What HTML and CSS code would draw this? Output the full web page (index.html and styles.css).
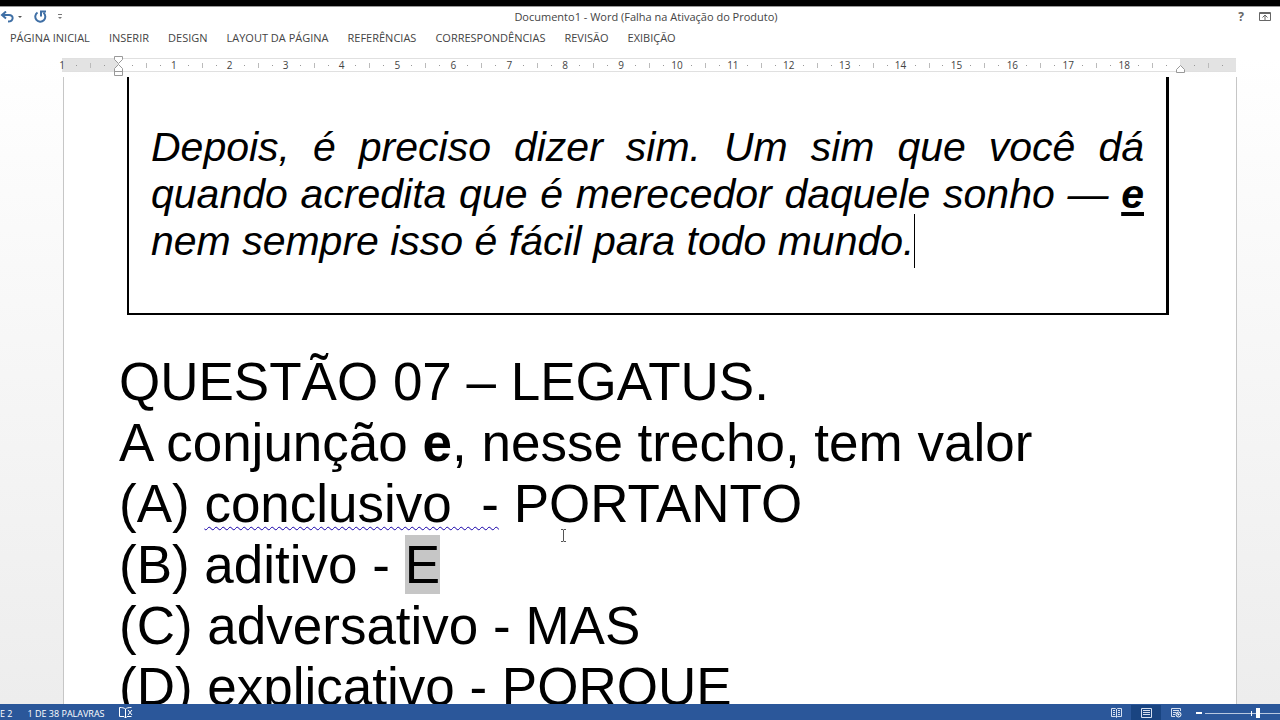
FILE: index.html
```html
<!DOCTYPE html>
<html lang="pt-BR">
<head>
  <meta charset="UTF-8">
  <title>Documento1 - Word</title>
  <link rel="stylesheet" href="styles.css">
</head>
<body>
  <!-- Title bar -->
  <header class="titlebar">
    <div class="quick">
      <button type="button" class="undo" aria-label="Desfazer">
        <svg width="14" height="12" viewBox="0 0 14 12"><path d="M6 0.500L2 4l4 3.500M2 4h7c5 0 5 6.500 -1 6.500" fill="none" stroke="#3f6fa5" stroke-width="2"/></svg>
      </button>
      <button type="button" class="arrow" aria-label="Opções de desfazer">
        <svg width="4" height="2" viewBox="0 0 4 2"><path d="M0 0h4L2 2z" fill="#555"/></svg>
      </button>
      <button type="button" class="redo" aria-label="Repetir">
        <svg width="13" height="13" viewBox="0 0 13 13"><path d="M3.500 2.500A5 5 0 1 0 9.500 2.800M7 6.500V1.500h5" fill="none" stroke="#3f6fa5" stroke-width="2"/></svg>
      </button>
      <button type="button" class="custom" aria-label="Personalizar">
        <svg width="4" height="5" viewBox="0 0 4 5"><path d="M0 0h4v1H0zM0 3h4L2 5z" fill="#777"/></svg>
      </button>
    </div>
    <div class="title">Documento1 - Word (Falha na Ativação do Produto)</div>
    <div class="window-tools">
      <button type="button" class="help" aria-label="Ajuda">?</button>
      <button type="button" aria-label="Opções de Exibição da Faixa de Opções">
        <svg width="12" height="9" viewBox="0 0 12 9"><path d="M0.500 0.500h11v8h-11zM0.500 1.500h11M6 8V3M3.500 5.500L6 3l2.500 2.500" fill="none" stroke="#666"/></svg>
      </button>
    </div>
  </header>

  <!-- Ribbon tabs -->
  <nav class="tabs">
    <button type="button">PÁGINA INICIAL</button>
    <button type="button">INSERIR</button>
    <button type="button">DESIGN</button>
    <button type="button">LAYOUT DA PÁGINA</button>
    <button type="button">REFERÊNCIAS</button>
    <button type="button">CORRESPONDÊNCIAS</button>
    <button type="button">REVISÃO</button>
    <button type="button">EXIBIÇÃO</button>
  </nav>

  <div class="workspace">
    <!-- Ruler, one cell per centimetre -->
    <div class="ruler" id="ruler"></div>

    <!-- Page -->
    <main class="page">
      <section class="quote">
        <p>Depois, é preciso dizer sim. Um sim que você dá quando acredita que é merecedor daquele sonho — <b class="key">e</b> nem sempre isso é fácil para todo mundo.<span class="caret"></span></p>
      </section>
      <section class="question">
        <p>QUESTÃO 07 – LEGATUS.</p>
        <p>A conjunção <b>e</b>, nesse trecho, tem valor</p>
        <p>(A) <span class="grammar">conclusivo  -</span> PORTANTO</p>
        <p>(B) aditivo - <span class="selected">E</span></p>
        <p>(C) adversativo - MAS</p>
        <p>(D) explicativo - PORQUE</p>
      </section>
      <svg class="cursor" width="7" height="13" viewBox="0 0 7 13"><path d="M1 0.500h2l0.500 0.500l0.500-0.500h2M3.500 1v11M1 12.500h2l0.500-0.500l0.500 0.500h2" fill="none" stroke="#555"/></svg>
    </main>
  </div>

  <!-- Status bar -->
  <footer class="statusbar">
    <span class="page-count">E 2</span>
    <span class="word-count">1 DE 38 PALAVRAS</span>
    <button type="button" class="proof" aria-label="Revisão de texto">
      <svg width="14" height="12" viewBox="0 0 14 12"><path d="M6.500 2C5 0.800 3 0.500 0.500 0.500v9H5l1.500 1.500V2C7.500 1 9 0.500 12.500 0.500M6.500 11L8 9.500h4.500M9 3l4 5M13 3l-4 5" fill="none" stroke="#fff"/></svg>
    </button>
    <div class="views">
      <button type="button" aria-label="Modo de leitura">
        <svg width="11" height="10" viewBox="0 0 11 10"><path d="M0.500 0.500h4l1 1l1-1h4v8h-4l-1 1l-1-1h-4zM5.500 1v8M2 2.500h2M2 4.500h2M2 6.500h2M7 2.500h2M7 4.500h2M7 6.500h2" fill="none" stroke="#d5dff0"/></svg>
      </button>
      <button type="button" class="active" aria-label="Layout de impressão">
        <svg width="11" height="10" viewBox="0 0 11 10"><path d="M0.500 0.500h10v9h-10zM2 2.500h7M2 4.500h7M2 6.500h7" fill="none" stroke="#d5dff0"/></svg>
      </button>
      <button type="button" aria-label="Layout da Web">
        <svg width="11" height="10" viewBox="0 0 11 10"><path d="M4 8.500H0.500v-8h9V3M2 2.500h6M2 4.500h3M2 6.500h2" fill="none" stroke="#d5dff0"/><circle cx="7.500" cy="6.500" r="2.500" fill="#2b579a" stroke="#fff"/><path d="M6 5l3 1l-2 2z" fill="#fff"/></svg>
      </button>
    </div>
    <button type="button" class="minus" aria-label="Reduzir"></button>
    <input type="range" class="zoom" min="0" max="100" value="50" aria-label="Zoom">
  </footer>

  <script>
    // Cells run from -1 to 19, the margins carry no number of their own past 18.
    let html = '';
    for (let cm = -1; cm <= 19; cm++) {
      const label = cm === 0 || cm === 19 ? '' : Math.abs(cm);
      const margin = cm < 0 || cm > 18 ? ' margin' : '';
      html += `<div class="cm${margin}"><span>${label}</span><i class="dot"></i><i class="tick"></i><i class="dot"></i></div>`;
    }
    // Indent markers
    html += `<svg class="marker left" width="9" height="20" viewBox="0 0 9 20"><path d="M0.500 0.500h8v3l-4 4l-4-4zM4.500 8.500l4 4v7h-8v-7zM0.500 15.500h8" fill="#fff" stroke="#999"/></svg>
             <svg class="marker right" width="9" height="8" viewBox="0 0 9 8"><path d="M4.500 0.500l4 4v3h-8v-3z" fill="#fff" stroke="#999"/></svg>`;
    document.getElementById('ruler').innerHTML = html;
  </script>
</body>
</html>
```
FILE: styles.css
```css
* { box-sizing: border-box; }
body { margin: 0; height: 100vh; display: flex; flex-direction: column; overflow: hidden; border-top: 6px solid #000; background: #fff; color: #444; font-family: "Open Sans", "Noto Sans", sans-serif; font-size: 11px; }
button { border: 0; padding: 0; background: none; color: inherit; font: inherit; display: flex; align-items: center; justify-content: center; }
p { margin: 0; }
/* Title bar */
.titlebar { display: grid; grid-template-columns: 1fr auto 1fr; align-items: center; height: 20px; border-top: 1px solid #999; }
.quick { display: flex; align-items: center; }
.arrow { margin-left: 4px; }
.redo { margin-left: 12px; }
.custom { margin-left: 11px; }
.title { padding-left: 12px; }
.window-tools { display: flex; justify-content: flex-end; align-items: center; gap: 15px; padding-right: 9px; }
.help { font-weight: bold; font-size: 12px; color: #666; }
/* Ribbon tabs */
.tabs { display: flex; gap: 19px; height: 32px; padding: 5px 10px 0; align-items: flex-start; line-height: 14px; }
/* Work area */
.workspace { flex: 1; min-height: 0; display: flex; flex-direction: column; padding: 0 43px 0 63px; background: linear-gradient(#fff, #fcfcfc 15%, #ededed); }
.ruler { position: relative; display: grid; grid-template-columns: repeat(21, 1fr); height: 14px; flex: none; margin: 0 1px 5px -1px; color: #444; font-size: 10px; }
.cm { display: grid; grid-template-columns: repeat(4, 1fr); align-items: center; line-height: 12px; background: #fff; border: solid #e0e0e0; border-width: 1px 0; }
.cm.margin { background: #e3e3e3; }
.cm span { width: 0; display: flex; justify-content: center; }
.dot { width: 1px; height: 1px; background: #999; }
.tick { width: 1px; height: 5px; background: #bbb; }
.marker { position: absolute; }
.marker.left { left: calc(100% / 21 - 4px); top: -2px; }
.marker.right { left: calc(100% * 20 / 21 - 4px); top: 7px; }
/* Page */
.page { position: relative; flex: 1; min-height: 0; overflow: hidden; padding: 0 67px 0 55px; background: #fff; border: solid #c6c6c6; border-width: 0 1px; color: #000; font-family: "Liberation Sans", Arial, sans-serif; }
.quote { margin-left: 8px; padding: 47px 22px 48px; border: solid #000; border-width: 0 3px 2px 2px; font-size: 41px; line-height: 47px; font-style: italic; text-align: justify; }
.key { text-decoration: underline; text-decoration-thickness: 4px; text-underline-offset: 4px; }
.caret { display: inline-block; width: 1px; height: 54px; margin: -10px 0; vertical-align: -3px; background: #000; }
.question { margin-top: 36px; font-size: 53px; line-height: 61px; }
.question p { white-space: pre; }
.grammar { text-decoration: underline wavy #1400a8 1px; text-decoration-skip-ink: none; text-underline-offset: 4px; }
.selected { background: #c6c6c6; }
.cursor { position: absolute; left: 496px; top: 452px; }
/* Status bar */
.statusbar { display: flex; align-items: center; height: 16px; flex: none; overflow: hidden; padding-top: 2px; background: #2b579a; color: #fff; font-size: 9px; }
.word-count { margin-left: 15px; }
.proof { margin-left: 14px; }
.views { display: flex; margin-left: auto; }
.views button { width: 30px; height: 16px; }
.views .active { background: #194481; }
.minus { width: 6px; height: 2px; margin: 0 3px 0 5px; background: #fff; }
.zoom { appearance: none; flex: none; width: 106px; height: 16px; margin: 0 -31px 0 0; background: linear-gradient(#fff, #fff) 46px 50% / 1px 5px no-repeat, linear-gradient(#b8c8e0, #b8c8e0) 0 50% / 100% 1px no-repeat; }
.zoom::-webkit-slider-thumb { appearance: none; width: 4px; height: 10px; background: #fff; }
```
